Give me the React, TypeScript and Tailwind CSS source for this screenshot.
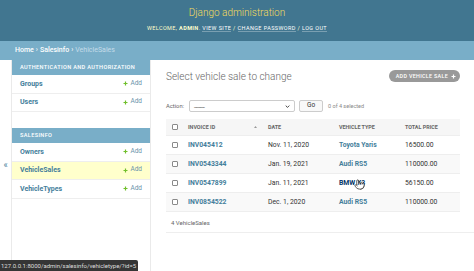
import React from "react";
import { Pointer } from "lucide-react";

const rows = [
  { id: "INV045412", date: "Nov. 11, 2020", type: "Toyota Yaris", price: "16500.00", hover: false },
  { id: "INV0543344", date: "Jan. 19, 2021", type: "Audi RS5", price: "110000.00", hover: false },
  { id: "INV0547899", date: "Jan. 11, 2021", type: "BMW X3", price: "56150.00", hover: true },
  { id: "INV0854522", date: "Dec. 1, 2020", type: "Audi RS5", price: "110000.00", hover: false },
];

function Plus({ className }: { className?: string }) {
  return (
    <svg viewBox="0 0 10 10" className={className}>
      <path d="M5 1v8M1 5h8" stroke="currentColor" strokeWidth="2.4" />
    </svg>
  );
}

function Checkbox() {
  return <span className="block h-[6px] w-[6px] rounded-[1px] border border-[#8a8a8a] bg-white" />;
}

function ModelRow({ name, active }: { name: string; active?: boolean }) {
  return (
    <div
      className={`flex h-[18.5px] items-center justify-between border-b border-[#eeeeee] px-[8px] ${
        active ? "bg-[#ffffcc]" : "bg-white"
      }`}
    >
      <span className="text-[7px] font-bold text-[#447e9b]">{name}</span>
      <span className="flex items-center gap-[2px] text-[6.5px] text-[#6b93ab]">
        <Plus className="h-[5px] w-[5px] text-[#70bf2b]" />
        Add
      </span>
    </div>
  );
}

function Caption({ text }: { text: string }) {
  return (
    <div className="flex h-[15px] items-center bg-[#79aec8] px-[8px] text-[5.6px] font-medium uppercase tracking-[0.35px] text-white">
      {text}
    </div>
  );
}

export default function App() {
  return (
    <div className="relative h-[271px] w-[474px] overflow-hidden bg-white font-[Roboto,sans-serif] text-[#333]">
      <header className="flex h-[41px] flex-col items-center bg-[#417690] pt-[6px]">
        <div className="text-[10px] font-light leading-[14px] text-[#f5dd5d]">Django administration</div>
        <div className="mt-[4px] text-[5.5px] uppercase leading-[8px] tracking-[0.4px] text-[#ffffcc]">
          Welcome, <strong className="font-bold">admin</strong>.{" "}
          <span className="border-b border-white/30 text-white">View site</span> /{" "}
          <span className="border-b border-white/30 text-white">Change password</span> /{" "}
          <span className="border-b border-white/30 text-white">Log out</span>
        </div>
      </header>

      <div className="flex h-[19px] items-center bg-[#79aec8] px-[15px] text-[7px] text-white">
        <span className="font-medium">Home</span>
        <span className="px-[2px]">›</span>
        <span className="font-medium">Salesinfo</span>
        <span className="px-[2px]">›</span>
        <span className="text-[#c4dce8]">VehicleSales</span>
      </div>

      <div className="flex h-[211px]">
        <div className="flex w-[12px] shrink-0 items-center justify-center border-r border-[#eaeaea] text-[9px] leading-none text-[#447e9b]">
          «
        </div>
        <nav className="w-[139px] shrink-0 border-r border-[#eaeaea]">
          <Caption text="Authentication and Authorization" />
          <ModelRow name="Groups" />
          <ModelRow name="Users" />
          <div className="h-[16px]" />
          <Caption text="Salesinfo" />
          <ModelRow name="Owners" />
          <ModelRow name="VehicleSales" active />
          <ModelRow name="VehicleTypes" />
        </nav>

        <main className="flex-1 pl-[15px] pr-[14px]">
          <div className="mt-[9px] flex h-[14px] items-center justify-between">
            <h1 className="text-[10px] font-light text-[#666]">Select vehicle sale to change</h1>
            <span className="flex h-[12px] items-center gap-[3px] rounded-full bg-[#999] pl-[7px] pr-[4px] text-[5.4px] font-medium uppercase tracking-[0.3px] text-white">
              Add vehicle sale
              <Plus className="h-[5px] w-[5px] text-white" />
            </span>
          </div>

          <div className="mt-[17px] flex h-[12px] items-center text-[5.8px] text-[#666]">
            <span>Action:</span>
            <span className="ml-[5px] flex h-[12px] w-[106px] items-center justify-between rounded-[2px] border border-[#cccccc] bg-white px-[4px] text-[#333]">
              <span className="text-[6px] tracking-[-0.5px]">---------</span>
              <svg viewBox="0 0 8 5" className="h-[3px] w-[5px]">
                <path d="M1 1l3 3 3-3" fill="none" stroke="#333" strokeWidth="1.5" />
              </svg>
            </span>
            <span className="ml-[4px] flex h-[12px] w-[24px] items-center justify-center rounded-[2px] border border-[#cccccc] bg-[#f8f8f8] text-[6.5px] text-[#333]">
              Go
            </span>
            <span className="ml-[5px] text-[5.5px] text-[#888]">0 of 4 selected</span>
          </div>

          <div className="mt-[7px]">
            <div className="grid h-[17px] grid-cols-[17px_80px_71px_66px_1fr] items-center border-b border-[#eeeeee] bg-[#f6f6f6] text-[5.4px] font-bold uppercase text-[#666]">
              <span className="flex justify-center">
                <Checkbox />
              </span>
              <span className="flex items-center justify-between pl-[5px] pr-[6px]">
                Invoice ID
                <svg viewBox="0 0 6 4" className="h-[2px] w-[3px]">
                  <path d="M0 4L3 0l3 4z" fill="#999" />
                </svg>
              </span>
              <span className="pl-[5px]">Date</span>
              <span className="pl-[5px]">Vehicle type</span>
              <span className="pl-[5px]">Total price</span>
            </div>
            {rows.map((r, i) => (
              <div
                key={r.id}
                className={`grid h-[19px] grid-cols-[17px_80px_71px_66px_1fr] items-center border-b border-[#eeeeee] text-[6.8px] ${
                  i % 2 === 1 ? "bg-[#f9f9f9]" : "bg-white"
                }`}
              >
                <span className="flex justify-center">
                  <Checkbox />
                </span>
                <span className="pl-[5px] font-bold text-[#447e9b]">{r.id}</span>
                <span className="pl-[5px] text-[#333]">{r.date}</span>
                <span className={`pl-[5px] font-bold ${r.hover ? "text-[#003366]" : "text-[#447e9b]"}`}>{r.type}</span>
                <span className="pl-[5px] text-[#333]">{r.price}</span>
              </div>
            ))}
          </div>

          <div className="-mr-[14px] flex h-[21px] items-center border-b border-[#eeeeee] pl-[5px] text-[6px] text-[#666]">
            4 VehicleSales
          </div>
        </main>
      </div>

      <Pointer className="absolute left-[354px] top-[179px] h-[11px] w-[11px]" fill="white" stroke="#222" strokeWidth={1.6} />

      <div className="absolute bottom-0 left-0 flex h-[11px] items-center whitespace-nowrap rounded-tr-[2px] bg-[#353535] pl-[1px] pr-[2px] text-[6px] text-[#dddddd]">
        127.0.0.1:8000/admin/salesinfo/vehicletype/?id=5
      </div>
    </div>
  );
}
